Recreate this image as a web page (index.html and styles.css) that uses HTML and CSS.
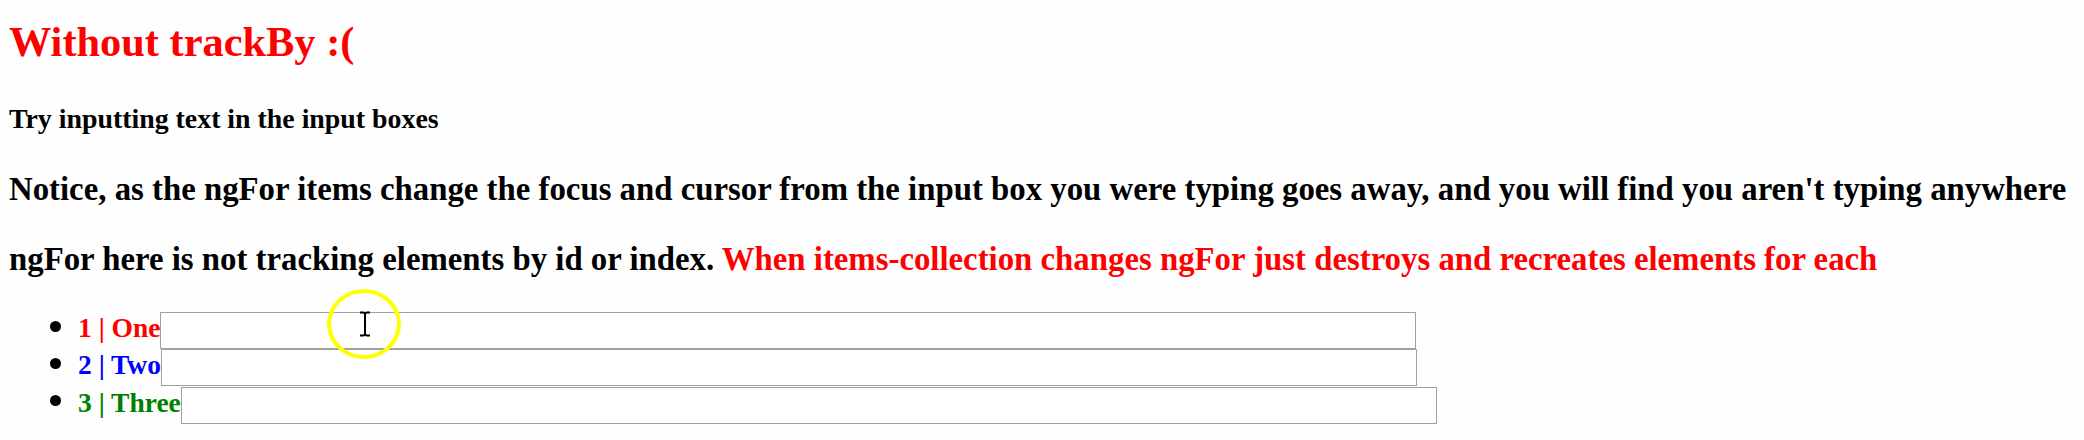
FILE: index.html
```html
<!DOCTYPE html>
<html lang="en">
<head>
    <meta charset="UTF-8">
    <title>Without trackBy</title>
    <link rel="stylesheet" href="styles.css">
</head>
<body>
<h1 class="title">Without trackBy :(</h1>
<h3 class="hint">Try inputting text in the input boxes</h3>
<h2 class="note">Notice, as the ngFor items change the focus and cursor from the input box you were typing goes away, and you will find you aren't typing anywhere</h2>
<h2 class="note">ngFor here is not tracking elements by id or index. <span class="warn">When items-collection changes ngFor just destroys and recreates elements for each</span></h2>

<ul class="items">
    <li><b class="red">1 | One</b><input type="text"></li>
    <li><b class="blue">2 | Two</b><input type="text"></li>
    <li><b class="green">3 | Three</b><input type="text"></li>
</ul>

<!-- mouse highlight from the screen recording -->
<div class="cursor-ring">
    <svg class="ibeam" width="12" height="26" viewBox="0 0 12 26">
        <path d="M1 1.5h3.5l1.5 1 1.5-1H11 M6 2.5v21 M1 24.5h3.5l1.5-1 1.5 1H11" fill="none" stroke="#000" stroke-width="2"/>
    </svg>
</div>
</body>
</html>
```

FILE: styles.css
```css
body {
    margin: 0;
    padding: 0 9px;
    background-color: #fefefe;
    color: #000;
    font-family: 'Liberation Serif', 'Times New Roman', serif;
}

.title {
    margin: 17.7px 0 0;
    font-size: 42.4px;
    line-height: 48px;
    color: #f00;
}

.hint {
    margin: 37px 0 0;
    font-size: 27.85px;
    line-height: 32px;
}

.note {
    margin: 35.3px 0 0;
    font-size: 32.8px;
    line-height: 38px;
    white-space: nowrap;
}

.note + .note {
    margin-top: 32px;
}

.warn {
    color: #f00;
}

.items {
    margin: 33.7px 0 0;
    padding-left: 69px;
    list-style: disc;
    font-size: 27.5px;
    line-height: 27.5px;
}

.items li {
    height: 37.4px;
}

.items li::marker {
    font-size: 36px;
}

.items input {
    box-sizing: border-box;
    width: 1256px;
    height: 37px;
    margin: 0;
    padding: 0;
    border: 1px solid #a0a0a0;
    background-color: #fff;
    vertical-align: middle;
}

.red { color: #f00; }
.blue { color: #00f; }
.green { color: #008000; }

.cursor-ring {
    position: absolute;
    left: 327px;
    top: 289px;
    width: 66px;
    height: 62px;
    border: 4px solid #ffff00;
    border-radius: 50%;
}

.ibeam {
    position: absolute;
    left: 28px;
    top: 18px;
}
```
